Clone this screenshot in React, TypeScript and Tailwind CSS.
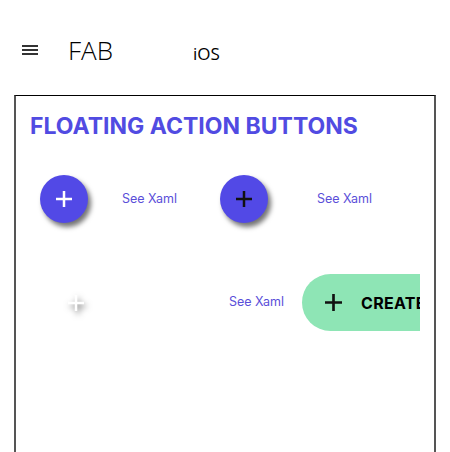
import React from 'react';

function Plus({ color, size = 16, stroke = 2.5 }: { color: string; size?: number; stroke?: number }) {
  return (
    <svg width={size} height={size} viewBox="0 0 16 16" fill="none">
      <path d="M8 0V16M0 8H16" stroke={color} strokeWidth={stroke} />
    </svg>
  );
}

function XamlLink({ className = '' }: { className?: string }) {
  return (
    <span className={`w-[56px] shrink-0 whitespace-nowrap text-[12.5px] text-[#5a4fd9] ${className}`}>
      See Xaml
    </span>
  );
}

export default function App() {
  return (
    <div className="w-[450px] h-[452px] overflow-hidden bg-white" style={{ fontFamily: 'Inter, sans-serif' }}>
      {/* header */}
      <div className="h-[95px] flex items-center pt-[5px]">
        <div className="ml-[22px] flex flex-col gap-[2px]">
          <span className="block w-[16px] h-[2px] bg-[#333]" />
          <span className="block w-[16px] h-[2px] bg-[#333]" />
          <span className="block w-[16px] h-[2px] bg-[#333]" />
        </div>
        <span className="ml-[30px] text-[26px] font-light text-black leading-none" style={{ fontFamily: '"Open Sans", sans-serif' }}>
          FAB
        </span>
        <span className="ml-[80px] mt-[6px] text-[17px] text-black leading-none" style={{ fontFamily: '"Open Sans", sans-serif' }}>
          iOS
        </span>
      </div>

      {/* frame */}
      <div className="ml-[14px] w-[422px] h-[400px] border-l-2 border-r-2 border-[#555] border-t border-t-black">
        <div className="pl-[14px] pr-[14px]">
          <h1 className="pt-[19px] text-[23px] leading-none font-bold text-[#514be2] whitespace-nowrap">
            FLOATING ACTION BUTTONS
          </h1>

          <div className="mt-[37px] flex items-center h-[48px]">
            <div className="ml-[10px] w-[48px] h-[48px] shrink-0 rounded-full bg-[#5249e6] flex items-center justify-center shadow-[3px_4px_5px_rgba(0,0,0,0.55)]">
              <Plus color="#fff" />
            </div>
            <XamlLink className="ml-[34px]" />
            <div className="ml-[42px] w-[48px] h-[48px] shrink-0 rounded-full bg-[#5249e6] flex items-center justify-center shadow-[3px_4px_5px_rgba(0,0,0,0.55)]">
              <Plus color="#111" />
            </div>
            <XamlLink className="ml-[49px]" />
          </div>

          <div className="mt-[51px] flex items-center h-[57px] w-[390px] overflow-hidden">
            <div className="ml-[38px] shrink-0 drop-shadow-[2px_3px_3px_rgba(0,0,0,0.5)]">
              <Plus color="#fff" />
            </div>
            <XamlLink className="ml-[145px]" />
            <div className="ml-[17px] h-[57px] w-[160px] shrink-0 rounded-l-full bg-[#8ee5b5] flex items-center pl-[23px]">
              <Plus color="#111" size={17} stroke={2.5} />
              <span className="ml-[19px] text-[16px] font-bold text-black tracking-[0.3px]">CREATE</span>
            </div>
          </div>
        </div>
      </div>
    </div>
  );
}
